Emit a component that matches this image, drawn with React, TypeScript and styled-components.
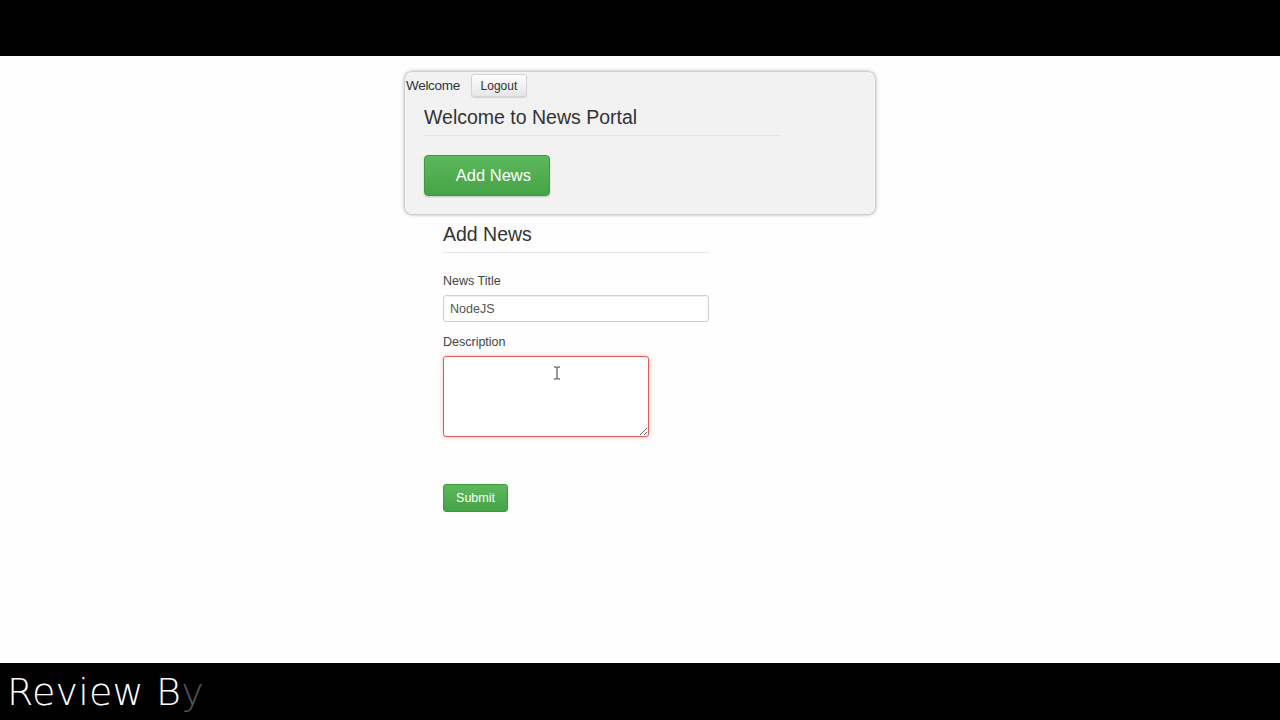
import styled, { createGlobalStyle } from 'styled-components';

const GlobalStyle = createGlobalStyle`
  html, body {
    margin: 0;
    padding: 0;
    background: #000;
  }
  body {
    font-family: "Liberation Sans", Arial, sans-serif;
  }
`;

const Screen = styled.div`
  width: 1280px;
  height: 720px;
  display: flex;
  flex-direction: column;
  background: #000;
  overflow: hidden;
`;

const TopBar = styled.div`
  height: 56px;
  background: #000;
`;

const Page = styled.div`
  height: 607px;
  background: #fefefe;
  display: flex;
  flex-direction: column;
  align-items: flex-start;
  padding-left: 405px;
  padding-top: 16px;
  box-sizing: border-box;
`;

const Jumbo = styled.div`
  width: 470px;
  height: 142px;
  box-sizing: border-box;
  background: #f2f2f2;
  border-radius: 7px;
  box-shadow: 0 0 4px rgba(0, 0, 0, 0.45);
  padding: 2px 0 0 0;
`;

const UserRow = styled.div`
  display: flex;
  align-items: center;
  gap: 11px;
  height: 23px;
`;

const WelcomeText = styled.span`
  font-size: 13.5px;
  color: #333;
  letter-spacing: -0.3px;
  margin-left: 1px;
`;

const SmallButton = styled.button`
  font-family: "Liberation Sans", Arial, sans-serif;
  font-size: 12px;
  color: #333;
  height: 23px;
  width: 56px;
  padding: 0;
  border: 1px solid #d4d4d4;
  border-radius: 3px;
  background: linear-gradient(#fdfdfd, #e6e6e6);
  box-shadow: 0 1px 1px rgba(0, 0, 0, 0.12);
`;

const JumboBody = styled.div`
  padding: 8px 0 0 19px;
`;

const PageTitle = styled.h1`
  margin: 0;
  font-size: 19.5px;
  font-weight: normal;
  color: #333;
  line-height: 24px;
  width: 356px;
  padding-bottom: 6px;
  border-bottom: 1px solid #e4e4e4;
`;

const BigGreen = styled.button`
  margin-top: 19px;
  width: 126px;
  height: 41px;
  font-family: "Liberation Sans", Arial, sans-serif;
  font-size: 16.5px;
  color: #fff;
  text-align: right;
  padding: 0 18px 0 0;
  border: 1px solid #3d9a3d;
  border-radius: 4px;
  background: linear-gradient(#5cb85c, #45a445);
  box-shadow: 0 1px 2px rgba(0, 0, 0, 0.2);
`;

const Form = styled.form`
  margin-left: 38px;
  margin-top: 8px;
  width: 266px;
  display: flex;
  flex-direction: column;
  align-items: flex-start;
`;

const FormTitle = styled.h2`
  margin: 0;
  width: 266px;
  font-size: 19.5px;
  font-weight: normal;
  color: #333;
  line-height: 24px;
  padding-bottom: 6px;
  border-bottom: 1px solid #e8e8e8;
`;

const Label = styled.label`
  font-size: 12.5px;
  color: #444;
  margin-top: ${p => p.$top}px;
  margin-bottom: 7px;
`;

const TextInput = styled.input`
  width: 266px;
  height: 27px;
  box-sizing: border-box;
  padding: 0 6px;
  font-family: "Liberation Sans", Arial, sans-serif;
  font-size: 12.5px;
  color: #555;
  border: 1px solid #cfcfcf;
  border-radius: 3px;
  background: #fff;
  box-shadow: inset 0 1px 1px rgba(0, 0, 0, 0.06);
`;

const AreaWrap = styled.div`
  position: relative;
`;

const TextArea = styled.textarea`
  display: block;
  width: 206px;
  height: 81px;
  box-sizing: border-box;
  border: 1px solid #e25b5b;
  border-radius: 3px;
  box-shadow: 0 0 5px rgba(233, 50, 45, 0.3);
  background: #fff;
  resize: both;
  outline: none;
`;

const Cursor = styled.svg`
  position: absolute;
  left: 110px;
  top: 10px;
`;

const SubmitButton = styled.button`
  margin-top: 47px;
  width: 65px;
  height: 28px;
  font-family: "Liberation Sans", Arial, sans-serif;
  font-size: 12.5px;
  color: #fff;
  border: 1px solid #3d9a3d;
  border-radius: 3px;
  background: linear-gradient(#5cb85c, #45a445);
`;

const BottomBar = styled.div`
  height: 57px;
  background: #000;
  display: flex;
  align-items: center;
  padding-left: 7px;
`;

const Caption = styled.span`
  font-family: "DejaVu Sans", sans-serif;
  font-weight: 300;
  font-size: 38px;
  color: #fff;
  letter-spacing: 0.2px;
  span {
    color: #555;
  }
`;

export default function App() {
  return (
    <Screen>
      <GlobalStyle />
      <TopBar />
      <Page>
        <Jumbo>
          <UserRow>
            <WelcomeText>Welcome</WelcomeText>
            <SmallButton>Logout</SmallButton>
          </UserRow>
          <JumboBody>
            <PageTitle>Welcome to News Portal</PageTitle>
            <BigGreen>Add News</BigGreen>
          </JumboBody>
        </Jumbo>
        <Form onSubmit={e => e.preventDefault()}>
          <FormTitle>Add News</FormTitle>
          <Label $top={21}>News Title</Label>
          <TextInput defaultValue="NodeJS" />
          <Label $top={13}>Description</Label>
          <AreaWrap>
            <TextArea />
            <Cursor width="8" height="14" viewBox="0 0 8 14">
              <path d="M1 1h2.5l.5.5.5-.5H7M4 1.5v11M1 13h2.5l.5-.5.5.5H7" stroke="#333" strokeWidth="1" fill="none" />
            </Cursor>
          </AreaWrap>
          <SubmitButton type="submit">Submit</SubmitButton>
        </Form>
      </Page>
      <BottomBar>
        <Caption>Review B<span>y</span></Caption>
      </BottomBar>
    </Screen>
  );
}
